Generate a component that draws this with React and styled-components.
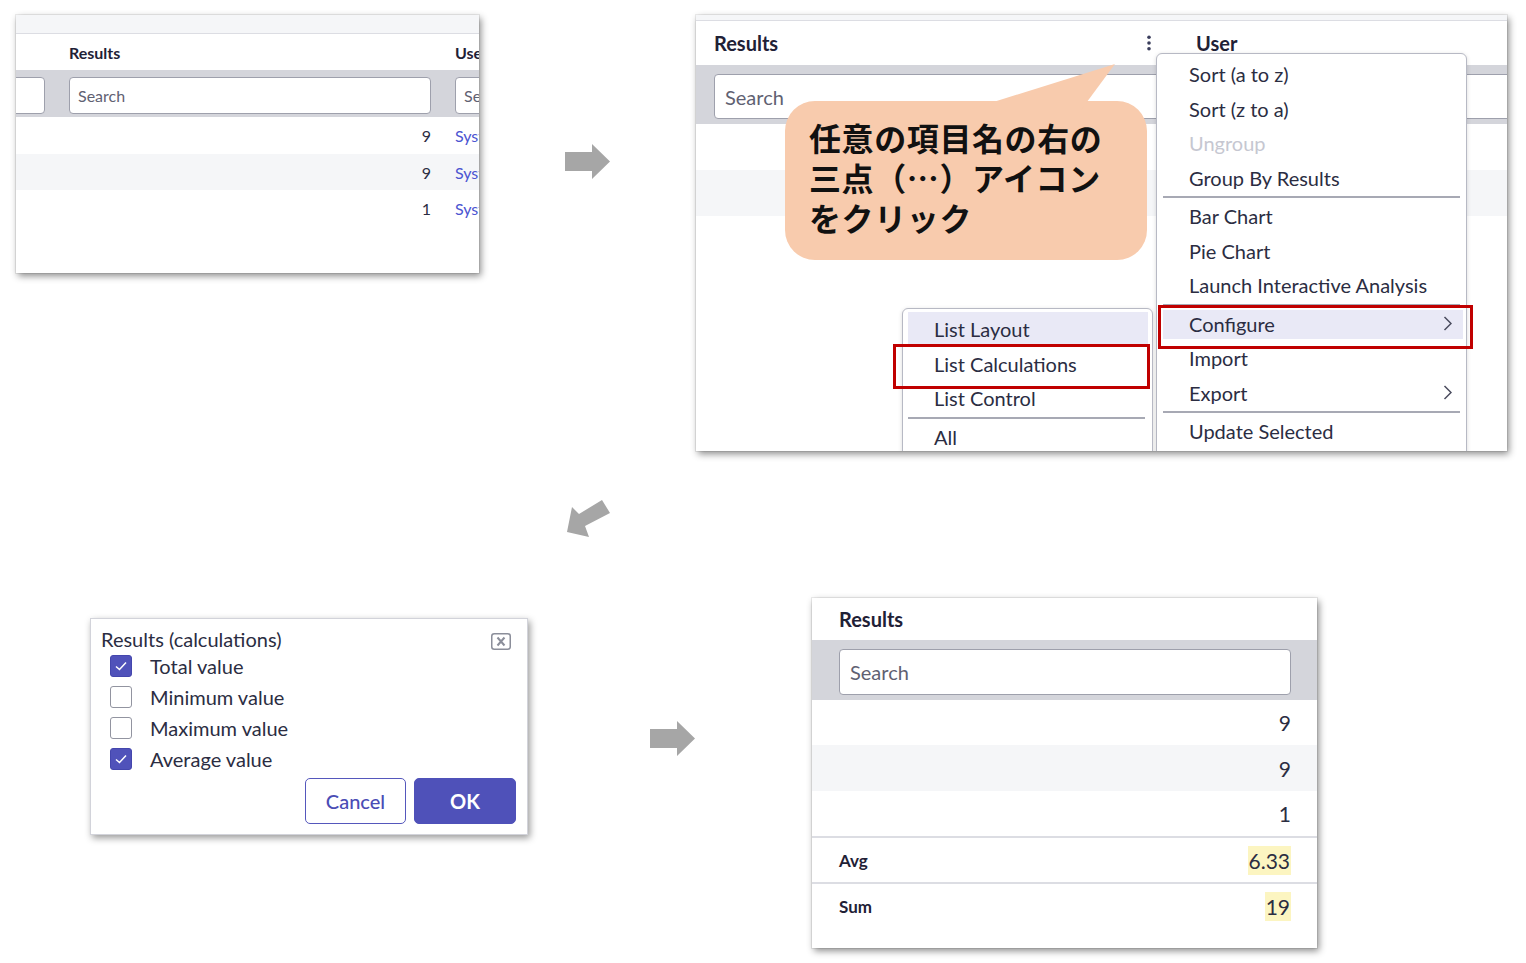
import React from 'react';
import styled, { createGlobalStyle } from 'styled-components';

const Global = createGlobalStyle`
  html, body { margin: 0; padding: 0; background: #fff; }
  body { font-family: Lato, "Noto Sans", sans-serif; color: #23253a; }
  * { box-sizing: border-box; }
`;

const Page = styled.div`
  width: 1526px;
  height: 963px;
  overflow: hidden;
  display: flex;
  flex-direction: column;
`;

const TopRow = styled.div`
  display: flex;
  align-items: flex-start;
  padding: 15px 0 0 16px;
`;

const MiddleRow = styled.div`
  display: flex;
  padding-left: 565px;
  margin-top: 47px;
  height: 41px;
`;

const BottomRow = styled.div`
  display: flex;
  align-items: flex-start;
  padding-left: 90px;
  margin-top: 59px;
`;

const Shot = styled.div`
  position: relative;
  flex: none;
  width: ${(p) => p.$w}px;
  height: ${(p) => p.$h}px;
  margin: ${(p) => p.$m || '0'};
  background: #fff;
  overflow: hidden;
  box-shadow: 0 0 0 1px rgba(0, 0, 0, 0.07), 2px 3px 7px rgba(0, 0, 0, 0.45);
`;

const ArrowSvg = styled.svg`
  flex: none;
  display: block;
  margin: ${(p) => p.$m || '0'};
`;

const TopStrip = styled.div`
  height: ${(p) => p.$h}px;
  background: #f5f6f8;
  border-bottom: 1px solid #dcdde3;
`;

const Grid = styled.div`
  display: grid;
  grid-template-columns: ${(p) => p.$cols};
  height: ${(p) => p.$h}px;
  background: ${(p) => p.$bg || '#fff'};
  align-items: center;
`;

const SearchGrid = styled(Grid)`
  align-items: start;
  padding-top: ${(p) => p.$pt}px;
  background: #d4d5db;
`;

const HeadCell = styled.div`
  display: flex;
  align-items: center;
  justify-content: space-between;
  padding: ${(p) => p.$pad};
  font-size: ${(p) => p.$fs}px;
  font-weight: 700;
  color: #1f2136;
  white-space: nowrap;
  overflow: hidden;
`;

const Cell = styled.div`
  padding: ${(p) => p.$pad};
  min-width: 0;
  overflow: ${(p) => (p.$clip ? 'hidden' : 'visible')};
  text-align: ${(p) => p.$align || 'left'};
  font-size: ${(p) => p.$fs}px;
  white-space: nowrap;
  color: #2b2d42;
`;

const SearchBox = styled.div`
  height: ${(p) => p.$h}px;
  width: ${(p) => p.$w || 'auto'};
  margin-left: ${(p) => p.$ml || 0}px;
  border: 1.5px solid #9ea0ac;
  border-radius: 4px;
  background: #fff;
  display: flex;
  align-items: center;
  padding-left: ${(p) => p.$pl}px;
  font-size: ${(p) => p.$fs}px;
  color: #5f6172;
  white-space: nowrap;
  overflow: hidden;
`;

const LinkText = styled.span`
  color: #4b54d1;
`;

const Bubble = styled.div`
  position: absolute;
  left: 89px;
  top: 86px;
  width: 362px;
  height: 159px;
  background: #f8cbad;
  border-radius: 30px;
  padding: 16px 0 0 24px;
  font-family: "Noto Sans CJK JP", "Noto Sans", sans-serif;
  font-weight: 700;
  font-size: 32px;
  line-height: 40px;
  letter-spacing: 0.6px;
  color: #111;
  &::before {
    content: '';
    position: absolute;
    left: 175px;
    top: -41px;
    width: 160px;
    height: 52px;
    background: #f8cbad;
    clip-path: polygon(8px 50px, 121px 50px, 155px 4px);
  }
`;

const BubbleLine = styled.div`
  position: relative;
  white-space: nowrap;
`;

const Menu = styled.div`
  position: absolute;
  left: ${(p) => p.$x}px;
  top: ${(p) => p.$y}px;
  width: ${(p) => p.$w}px;
  padding: 3px ${(p) => p.$pr}px 20px ${(p) => p.$pl}px;
  background: #fff;
  border: 1px solid #b7b9c4;
  border-radius: 6px 6px 0 0;
  box-shadow: 0 1px 4px rgba(0, 0, 0, 0.15);
`;

const activeBg = (p) => {
  if (!p.$active) return 'transparent';
  if (p.$tight)
    return 'linear-gradient(transparent 2.5px, #e9e9f6 2.5px, #e9e9f6 calc(100% - 2.5px), transparent calc(100% - 2.5px))';
  return '#e9e9f6';
};

const MenuItem = styled.div`
  display: flex;
  align-items: center;
  justify-content: space-between;
  height: 34.5px;
  padding: 0 11px 0 26px;
  font-size: 20px;
  white-space: nowrap;
  color: ${(p) => (p.$disabled ? '#c6c7d1' : '#2b2d42')};
  background: ${activeBg};
`;

const MenuSep = styled.div`
  height: 2px;
  margin: 1px 3px 1px 0;
  background: #a7a9b4;
`;

const RedBox = styled.div`
  position: absolute;
  left: ${(p) => p.$x}px;
  top: ${(p) => p.$y}px;
  width: ${(p) => p.$w}px;
  height: ${(p) => p.$h}px;
  border: 3.5px solid #c00000;
  pointer-events: none;
`;

const Dialog = styled.div`
  flex: none;
  width: 438px;
  height: 217px;
  margin-top: 20px;
  padding: 9px 11px 10px 10px;
  display: flex;
  flex-direction: column;
  background: #fff;
  border: 1px solid #d2d3da;
  box-shadow: 2px 3px 7px rgba(0, 0, 0, 0.4);
`;

const DialogTitle = styled.div`
  display: flex;
  align-items: center;
  justify-content: space-between;
  height: 22px;
  font-size: 20px;
  line-height: 22px;
  color: #2b2d42;
`;

const CloseSvg = styled.svg`
  display: block;
  margin: 4px 5px 0 0;
`;

const CheckRow = styled.label`
  display: flex;
  align-items: center;
  height: 31.5px;
  padding-left: 9px;
  font-size: 20px;
  color: #2b2d42;
`;

const CheckBox = styled.span`
  flex: none;
  width: 22px;
  height: 22px;
  border-radius: 3px;
  display: flex;
  align-items: center;
  justify-content: center;
  background: ${(p) => (p.$on ? '#5052ba' : '#fff')};
  border: 1.5px solid ${(p) => (p.$on ? '#4446ad' : '#9294a0')};
`;

const CheckLabel = styled.span`
  margin-left: 18px;
`;

const ButtonRow = styled.div`
  display: flex;
  justify-content: flex-end;
  gap: 8px;
  margin-top: 4px;
`;

const Button = styled.button`
  height: 46px;
  width: ${(p) => p.$w}px;
  border-radius: 5px;
  font-family: Lato, sans-serif;
  font-size: 20px;
  font-weight: ${(p) => (p.$primary ? 700 : 500)};
  color: ${(p) => (p.$primary ? '#fff' : '#4b4db5')};
  background: ${(p) => (p.$primary ? '#4f51b9' : '#fff')};
  border: 1.5px solid ${(p) => (p.$primary ? '#4f51b9' : '#5557bc')};
  padding: 0;
`;

const DRow = styled.div`
  display: flex;
  align-items: center;
  justify-content: space-between;
  height: ${(p) => p.$h}px;
  padding: 0 26px 0 27px;
  background: ${(p) => p.$bg || '#fff'};
  border-top: ${(p) => (p.$line ? '2px solid #dcdde3' : 'none')};
  font-size: 21px;
  color: #2b2d42;
`;

const SumLabel = styled.span`
  font-size: 17px;
  font-weight: 700;
  color: #1f2136;
`;

const Highlight = styled.span`
  background: #fcf5c1;
  line-height: 29px;
  padding: 0 1px;
`;

function RightArrow({ m }) {
  return (
    <ArrowSvg $m={m} width="45" height="35" viewBox="0 0 45 35">
      <polygon points="0,8 27,8 27,0 45,17.5 27,35 27,27 0,27" fill="#a6a6a6" />
    </ArrowSvg>
  );
}

function DownLeftArrow() {
  return (
    <ArrowSvg width="47" height="41" viewBox="0 0 47 41">
      <polygon points="2,34 7,9 14,16 37,2 45,15 20,28 24,39" fill="#a6a6a6" />
    </ArrowSvg>
  );
}

function Dots() {
  return (
    <svg width="6" height="16" viewBox="0 0 6 16">
      <circle cx="3" cy="2.2" r="1.8" fill="#3a3d5c" />
      <circle cx="3" cy="8" r="1.8" fill="#3a3d5c" />
      <circle cx="3" cy="13.8" r="1.8" fill="#3a3d5c" />
    </svg>
  );
}

function Chevron() {
  return (
    <svg width="9" height="15" viewBox="0 0 9 15">
      <polyline points="1.5,1 8,7.5 1.5,14" fill="none" stroke="#4a4c5e" strokeWidth="1.5" />
    </svg>
  );
}

function Check() {
  return (
    <svg width="16" height="16" viewBox="0 0 16 16">
      <polyline points="3,8.5 6.5,11.5 13,4.5" fill="none" stroke="#fff" strokeWidth="1.5" />
    </svg>
  );
}

function Close() {
  return (
    <CloseSvg width="20" height="17" viewBox="0 0 20 17">
      <rect x="0.75" y="0.75" width="18.5" height="15.5" rx="2.5" fill="#fff" stroke="#8b8e9a" strokeWidth="1.5" />
      <path d="M6.5 4.5 L13.5 12.5 M13.5 4.5 L6.5 12.5" stroke="#8b8e9a" strokeWidth="2" />
    </CloseSvg>
  );
}

const aRows = [
  { v: '9', bg: '#fff' },
  { v: '9', bg: '#f5f6f8' },
  { v: '1', bg: '#fff' },
];

function PanelA() {
  const cols = '41px 386px minmax(0,1fr)';
  return (
    <Shot $w={463} $h={258}>
      <TopStrip $h={19} />
      <Grid $cols={cols} $h={36}>
        <div />
        <HeadCell $pad="0 12px" $fs={16}>Results</HeadCell>
        <HeadCell $pad="0 0 0 12px" $fs={16}>User</HeadCell>
      </Grid>
      <SearchGrid $cols={cols} $h={47} $pt={7}>
        <Cell $pad="0 12px 0 0">
          <SearchBox $h={37} $ml={-20} $pl={8} $fs={16} />
        </Cell>
        <Cell $pad="0 12px">
          <SearchBox $h={37} $pl={8} $fs={16}>Search</SearchBox>
        </Cell>
        <Cell $pad="0 0 0 12px" $clip>
          <SearchBox $h={37} $w="200px" $pl={8} $fs={16}>Search</SearchBox>
        </Cell>
      </SearchGrid>
      {aRows.map((r, i) => (
        <Grid key={i} $cols={cols} $h={36.7} $bg={r.bg}>
          <div />
          <Cell $pad="0 12px" $align="right" $fs={16}>{r.v}</Cell>
          <Cell $pad="0 0 0 12px" $fs={16} $clip>
            <LinkText>System Administrator</LinkText>
          </Cell>
        </Grid>
      ))}
    </Shot>
  );
}

function PanelB() {
  const cols = '478px minmax(0,1fr)';
  return (
    <Shot $w={811} $h={436} $m="0 0 0 86px">
      <TopStrip $h={6} />
      <Grid $cols={cols} $h={44}>
        <HeadCell $pad="0 22px 0 18px" $fs={20}>
          Results
          <Dots />
        </HeadCell>
        <HeadCell $pad="0 0 0 22px" $fs={20}>User</HeadCell>
      </Grid>
      <SearchGrid $cols={cols} $h={59} $pt={9}>
        <Cell $pad="0 12px 0 18px">
          <SearchBox $h={45} $pl={10} $fs={20}>Search</SearchBox>
        </Cell>
        <Cell $pad="0 0 0 22px" $clip>
          <SearchBox $h={45} $w="420px" $pl={10} $fs={20} />
        </Cell>
      </SearchGrid>
      {aRows.map((r, i) => (
        <Grid key={i} $cols={cols} $h={46} $bg={r.bg}>
          <div />
          <div />
        </Grid>
      ))}

      <Bubble>
        <BubbleLine>任意の項目名の右の</BubbleLine>
        <BubbleLine>三点（…）アイコン</BubbleLine>
        <BubbleLine>をクリック</BubbleLine>
      </Bubble>

      <Menu $x={460} $y={38} $w={311} $pl={6} $pr={3}>
        <MenuItem>Sort (a to z)</MenuItem>
        <MenuItem>Sort (z to a)</MenuItem>
        <MenuItem $disabled>Ungroup</MenuItem>
        <MenuItem>Group By Results</MenuItem>
        <MenuSep />
        <MenuItem>Bar Chart</MenuItem>
        <MenuItem>Pie Chart</MenuItem>
        <MenuItem>Launch Interactive Analysis</MenuItem>
        <MenuSep />
        <MenuItem $active $tight>
          Configure
          <Chevron />
        </MenuItem>
        <MenuItem>Import</MenuItem>
        <MenuItem>
          Export
          <Chevron />
        </MenuItem>
        <MenuSep />
        <MenuItem>Update Selected</MenuItem>
      </Menu>

      <Menu $x={206} $y={293} $w={251} $pl={5} $pr={4}>
        <MenuItem $active>List Layout</MenuItem>
        <MenuItem>List Calculations</MenuItem>
        <MenuItem>List Control</MenuItem>
        <MenuSep />
        <MenuItem>All</MenuItem>
      </Menu>

      <RedBox $x={462} $y={290} $w={315} $h={44} />
      <RedBox $x={197} $y={329} $w={257} $h={45} />
    </Shot>
  );
}

const checks = [
  { label: 'Total value', on: true },
  { label: 'Minimum value', on: false },
  { label: 'Maximum value', on: false },
  { label: 'Average value', on: true },
];

function PanelC() {
  return (
    <Dialog>
      <DialogTitle>
        Results (calculations)
        <Close />
      </DialogTitle>
      {checks.map((c) => (
        <CheckRow key={c.label}>
          <CheckBox $on={c.on}>{c.on && <Check />}</CheckBox>
          <CheckLabel>{c.label}</CheckLabel>
        </CheckRow>
      ))}
      <ButtonRow>
        <Button $w={101}>Cancel</Button>
        <Button $w={102} $primary>OK</Button>
      </ButtonRow>
    </Dialog>
  );
}

function PanelD() {
  return (
    <Shot $w={505} $h={350} $m="0 0 0 117px">
      <Grid $cols="1fr" $h={42}>
        <HeadCell $pad="0 26px 0 27px" $fs={20}>Results</HeadCell>
      </Grid>
      <SearchGrid $cols="1fr" $h={60} $pt={9}>
        <Cell $pad="0 26px 0 27px">
          <SearchBox $h={46} $pl={10} $fs={20}>Search</SearchBox>
        </Cell>
      </SearchGrid>
      <DRow $h={45}><span /><span>9</span></DRow>
      <DRow $h={46} $bg="#f5f6f8"><span /><span>9</span></DRow>
      <DRow $h={45}><span /><span>1</span></DRow>
      <DRow $h={46} $line>
        <SumLabel>Avg</SumLabel>
        <Highlight>6.33</Highlight>
      </DRow>
      <DRow $h={46} $line>
        <SumLabel>Sum</SumLabel>
        <Highlight>19</Highlight>
      </DRow>
    </Shot>
  );
}

export default function App() {
  return (
    <>
      <Global />
      <Page>
        <TopRow>
          <PanelA />
          <RightArrow m="129px 0 0 86px" />
          <PanelB />
        </TopRow>
        <MiddleRow>
          <DownLeftArrow />
        </MiddleRow>
        <BottomRow>
          <PanelC />
          <RightArrow m="123px 0 0 122px" />
          <PanelD />
        </BottomRow>
      </Page>
    </>
  );
}
